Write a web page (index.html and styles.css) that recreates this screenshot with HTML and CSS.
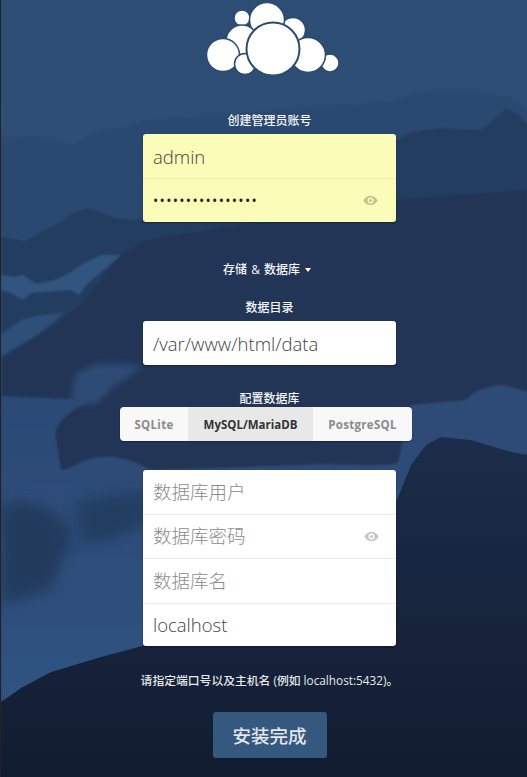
FILE: index.html
```html
<!DOCTYPE html>
<html lang="zh-CN">
<head>
  <meta charset="UTF-8" />
  <meta name="viewport" content="width=device-width, initial-scale=1.0"/>
  <title>ownCloud</title>
  <link rel="stylesheet" href="styles.css">
</head>
<body>

  <!-- Fondo: montañas y nubes -->
  <svg class="scene" viewBox="0 0 527 777" aria-hidden="true">
    <defs>
      <linearGradient id="sky" x1="0" y1="0" x2="0" y2="1">
        <stop offset="0" stop-color="#2e4d74"/>
        <stop offset="1" stop-color="#30517c"/>
      </linearGradient>
      <linearGradient id="hill" gradientUnits="userSpaceOnUse" x1="0" y1="440" x2="0" y2="777">
        <stop offset="0" stop-color="#1b2d4a"/>
        <stop offset="1" stop-color="#121c30"/>
      </linearGradient>
      <linearGradient id="cloud" gradientUnits="userSpaceOnUse" x1="0" y1="400" x2="0" y2="700">
        <stop offset="0" stop-color="#2c4a75"/>
        <stop offset="1" stop-color="#305382"/>
      </linearGradient>
      <filter id="soft" filterUnits="userSpaceOnUse" x="0" y="0" width="527" height="777"><feGaussianBlur stdDeviation="0.8"/></filter>
      <filter id="mist" filterUnits="userSpaceOnUse" x="0" y="0" width="527" height="777"><feGaussianBlur stdDeviation="3"/></filter>
      <filter id="softer" filterUnits="userSpaceOnUse" x="0" y="0" width="527" height="777"><feGaussianBlur stdDeviation="7"/></filter>
    </defs>
    <rect width="527" height="777" fill="url(#sky)"/>
    <g filter="url(#soft)">
      <path fill="#2c4970" d="M0 137 L40 136 72 144 90 134 120 127 145 120 396 100 420 92 440 89 455 92 470 90 490 94 510 97 527 110 V400 H0Z"/>
      <path fill="#243c5f" d="M0 237 L25 241 40 232 60 222 72 212 90 208 110 217 130 220 145 218 200 200 396 140 410 132 440 128 480 130 490 122 505 108 515 113 527 125 V420 H0Z"/>
      <path fill="#33557f" d="M0 275 L12 277 22 275 35 284 55 280 70 272 85 262 100 255 120 255 100 272 85 285 78 295 70 290 30 293 22 300 10 293 0 290Z"/>
      <path fill="#2f4f78" d="M0 335 L20 320 40 315 63 313 40 332 0 357Z"/>
      <path fill="#203556" d="M0 358 L40 335 80 305 100 280 120 255 145 240 396 200 527 190 V777 H0Z"/>
    </g>
    <path filter="url(#mist)" fill="#2d4c76" d="M70 404 L74 375 95 364 125 364 142 367 114 385 95 404Z"/>
    <path filter="url(#soft)" fill="url(#cloud)" d="M0 396 L90 400 C70 410 50 425 55 440 L60 470 C70 472 80 455 110 457 C130 458 145 468 150 470 L300 465 C340 462 380 470 410 460 L415 777 H0Z"/>
    <path filter="url(#softer)" fill="#223a5d" d="M0 505 C30 495 60 510 72 535 L50 590 0 605Z"/>
    <path filter="url(#softer)" fill="#243e62" d="M75 500 L145 490 V525 L110 540 80 545Z"/>
    <path filter="url(#soft)" fill="#2d4c77" d="M465 400 C475 388 500 382 510 387 L527 392 V470 H395 L410 405Z"/>
    <path fill="url(#hill)" d="M0 702 L20 688 50 672 80 663 100 657 145 645 300 600 396 500 410 465 425 445 440 437 470 440 510 452 527 455 L527 777 L0 777Z"/>
  </svg>

  <main class="setup">
    <svg class="logo" viewBox="0 0 132 72" aria-label="ownCloud">
      <g fill="#fff" stroke="#2d4a70" stroke-width="1.5">
        <circle cx="35" cy="15" r="8"/>
        <circle cx="86" cy="27" r="12.5"/>
        <circle cx="60" cy="17" r="17.5"/>
        <circle cx="35" cy="38" r="16"/>
        <circle cx="16" cy="52" r="16.500"/>
        <circle cx="123" cy="60" r="9"/>
        <circle cx="101" cy="52" r="17.500"/>
        <circle cx="38" cy="61" r="10.500"/>
        <circle cx="66" cy="46" r="26.500" stroke-width="2"/>
      </g>
    </svg>

    <h2 class="label label-admin">创建管理员账号</h2>
    <div class="group group-filled">
      <div class="field"><input type="text" value="admin"></div>
      <div class="field">
        <input class="dots" type="password" value="aaaaaaaaaaaaaaaa">
        <svg class="eye" viewBox="0 0 16 16"><path d="M8 3C4.4 3 1.6 5.5.4 8c1.2 2.500 4 5 7.600 5s6.400-2.500 7.600-5C14.400 5.500 11.600 3 8 3zm0 8.200A3.200 3.200 0 1 1 8 4.800a3.200 3.200 0 0 1 0 6.400zM8 6.300a1.700 1.700 0 1 0 0 3.400 1.700 1.700 0 0 0 0-3.400z"/></svg>
      </div>
    </div>

    <div class="label toggle">存储 <span class="amp">&amp;</span> 数据库<span class="caret"></span></div>

    <h2 class="label label-data">数据目录</h2>
    <div class="group">
      <div class="field"><input type="text" value="/var/www/html/data"></div>
    </div>

    <h2 class="label label-db">配置数据库</h2>
    <div class="db-tabs">
      <button class="tab-sqlite">SQLite</button>
      <button class="tab-mysql selected">MySQL/MariaDB</button>
      <button class="tab-pg">PostgreSQL</button>
    </div>

    <div class="group group-db">
      <div class="field"><input type="text" placeholder="数据库用户"></div>
      <div class="field">
        <input type="password" placeholder="数据库密码">
        <svg class="eye" viewBox="0 0 16 16"><path d="M8 3C4.4 3 1.6 5.500.4 8c1.200 2.500 4 5 7.600 5s6.400-2.500 7.600-5C14.400 5.500 11.600 3 8 3zm0 8.200A3.200 3.200 0 1 1 8 4.800a3.200 3.200 0 0 1 0 6.400zM8 6.300a1.700 1.700 0 1 0 0 3.400 1.700 1.700 0 0 0 0-3.400z"/></svg>
      </div>
      <div class="field"><input type="text" placeholder="数据库名"></div>
      <div class="field"><input type="text" value="localhost"></div>
    </div>

    <p class="hint">请指定端口号以及主机名 (例如 <span class="thin">localhost:5432)</span>。</p>

    <button class="finish">安装完成</button>
  </main>

</body>
</html>
```

FILE: styles.css
```css
/* Pagina */
html, body {
  margin: 0;
  height: 100%;
  overflow: hidden;
  background: #222;
}

body {
  position: relative;
  font-family: "Open Sans", "Noto Sans CJK SC", sans-serif;
  color: #fff;
}

.scene {
  position: absolute;
  top: 0;
  left: 1px;
  width: 527px;
  height: 777px;
}

/* Columna central */
.setup {
  position: relative;
  display: flex;
  flex-direction: column;
  align-items: center;
  padding-left: 12px;
}

.logo {
  width: 132px;
  height: 72px;
  margin: 3px 0 0 7px;
}

.label {
  margin: 0;
  font-size: 12px;
  font-weight: 500;
  line-height: 16px;
  text-align: center;
  color: #f4f5f7;
}
.label-admin { margin-top: 38px; }
.label-data { margin-top: 22px; }
.label-db { margin-top: 26px; }

.toggle {
  display: flex;
  align-items: center;
  gap: 3px;
  margin: 40px 5px 0 0;
}
.amp { font-weight: 400; margin: 0 1px; }
.caret {
  width: 0;
  height: 0;
  margin-left: 2px;
  border-left: 3.500px solid transparent;
  border-right: 3.500px solid transparent;
  border-top: 4px solid #fff;
}

/* Grupos de campos */
.group {
  display: flex;
  flex-direction: column;
  width: 253px;
  min-height: 44px;
  margin-top: 5px;
  background: #fff;
  border-radius: 3px;
  box-shadow: 0 1px 2px rgba(0,0,0,0.35);
  overflow: hidden;
}
.group-filled {
  height: 88px;
  background: #fafcb8;
}
.group-db {
  height: 176px;
  margin-top: 29px;
}

.field {
  position: relative;
  display: flex;
  height: 44.500px;
  box-sizing: border-box;
  border-bottom: 1px solid #eaeaea;
}
.group-filled .field { border-bottom-color: #ecedab; }
.field:last-child {
  flex: 1;
  height: auto;
  border-bottom: none;
}

.field input {
  flex: 1;
  min-width: 0;
  box-sizing: border-box;
  padding: 1px 10px 0;
  border: none;
  outline: none;
  background: transparent;
  font-family: "Open Sans", "Noto Sans CJK SC", sans-serif;
  font-size: 18.500px;
  font-weight: 300;
  color: #444;
}
.group-db .field input {
  padding: 0 10px 1px;
}
.field input::placeholder {
  color: #8a8a8a;
  opacity: 1;
}
.field input.dots {
  color: #222;
  font-size: 14px;
  font-weight: 400;
  letter-spacing: 1.300px;
}

.eye {
  position: absolute;
  top: 14px;
  right: 18px;
  width: 15px;
  height: 15px;
  fill: #000;
  opacity: 0.22;
}
.group-db .eye { right: 17px; }

/* Selector de base de datos */
.db-tabs {
  display: flex;
  width: 292px;
  height: 34px;
  margin-right: 7px;
  background: #f8f8f8;
  border-radius: 4px;
  box-shadow: 0 1px 2px rgba(0,0,0,0.3);
  overflow: hidden;
}
.db-tabs button {
  border: none;
  padding: 0;
  background: transparent;
  font-family: "Open Sans", sans-serif;
  font-size: 11.500px;
  font-weight: 700;
  letter-spacing: 0.3px;
  color: #8a8a8a;
}
.tab-sqlite { width: 68px; }
.tab-mysql { width: 125px; }
.tab-pg { width: 99px; }
.db-tabs button.selected {
  background: #e8e8e8;
  color: #333;
  letter-spacing: 0;
}

.hint {
  margin: 26px 0 0;
  font-size: 11.800px;
  font-weight: 500;
  line-height: 16px;
  color: #e6e8ec;
  white-space: nowrap;
}
.thin { font-weight: 400; }

.finish {
  width: 114px;
  height: 46px;
  margin-top: 24px;
  border: none;
  border-radius: 3px;
  background: #35587f;
  font-family: "Open Sans", "Noto Sans CJK SC", sans-serif;
  font-size: 18.500px;
  font-weight: 500;
  color: #e4e6ea;
}
```
